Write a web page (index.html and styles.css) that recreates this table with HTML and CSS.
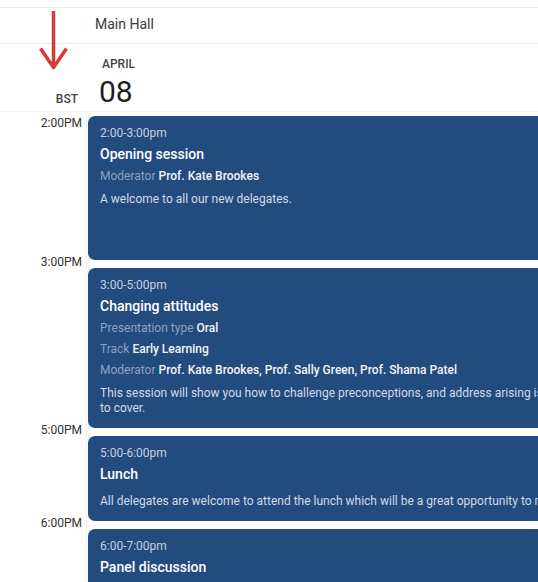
FILE: index.html
```html
<!DOCTYPE html>
<html lang="en">
<head>
<meta charset="utf-8">
<title>Agenda</title>
<link rel="stylesheet" href="styles.css">
</head>
<body>
<div class="page">
  <svg class="arrow" viewBox="0 0 80 80" width="80" height="80" aria-hidden="true">
    <line x1="53.5" y1="11" x2="53.5" y2="66" />
    <polyline points="40.5,48.5 53.5,67.5 66.5,48.5" />
  </svg>

  <div class="room-row">
    <div class="corner"></div>
    <div class="room">Main Hall</div>
  </div>

  <div class="date-row">
    <div class="tz">BST</div>
    <div class="date">
      <div class="month">APRIL</div>
      <div class="day">08</div>
    </div>
  </div>

  <div class="schedule">
    <div class="hour hour-first">2:00PM</div>
    <div class="session session-tall">
      <div class="time">2:00-3:00pm</div>
      <div class="title">Opening session</div>
      <div class="meta"><span class="label">Moderator</span> <span class="value">Prof. Kate Brookes</span></div>
      <div class="desc">A welcome to all our new delegates.</div>
    </div>

    <div class="hour">3:00PM</div>
    <div class="session">
      <div class="time">3:00-5:00pm</div>
      <div class="title">Changing attitudes</div>
      <div class="meta"><span class="label">Presentation type</span> <span class="value">Oral</span></div>
      <div class="meta"><span class="label">Track</span> <span class="value">Early Learning</span></div>
      <div class="meta"><span class="label">Moderator</span> <span class="value">Prof. Kate Brookes, Prof. Sally Green, Prof. Shama Patel</span></div>
      <div class="desc">This session will show you how to challenge preconceptions, and address arising issues that delegates have asked us<br>to cover.</div>
    </div>

    <div class="hour">5:00PM</div>
    <div class="session">
      <div class="time">5:00-6:00pm</div>
      <div class="title">Lunch</div>
      <div class="desc">All delegates are welcome to attend the lunch which will be a great opportunity to meet other delegates.</div>
    </div>

    <div class="hour">6:00PM</div>
    <div class="session session-open">
      <div class="time">6:00-7:00pm</div>
      <div class="title">Panel discussion</div>
    </div>
  </div>
</div>
</body>
</html>
```

FILE: styles.css
```css
html, body {
  margin: 0;
  padding: 0;
  background: #ffffff;
}

body {
  width: 538px;
  height: 582px;
  overflow: hidden;
  font-family: Roboto, "Liberation Sans", Arial, sans-serif;
  color: #333333;
}

.page {
  position: relative;
  width: 880px;
  padding-top: 7px;
}

.arrow {
  position: absolute;
  left: 0;
  top: 0;
  fill: none;
  stroke: #d63b3c;
  stroke-width: 3.5;
  stroke-linejoin: round;
}

.room-row {
  display: grid;
  grid-template-columns: 88px 1fr;
  border-top: 1px solid #ececec;
  border-bottom: 1px solid #ececec;
}

.room {
  padding: 6px 7px 9px;
  font-size: 14px;
  line-height: 20px;
  color: #3a3a3a;
}

.date-row {
  display: grid;
  grid-template-columns: 88px 1fr;
  border-bottom: 1px solid #f1f1f1;
}

.tz {
  display: flex;
  align-items: flex-end;
  justify-content: flex-end;
  padding: 0 10px 4px 0;
  font-size: 12px;
  line-height: 16px;
  font-weight: 500;
  color: #444444;
}

.date {
  padding: 12px 12px 3px 11px;
}

.month {
  padding-left: 3px;
  font-size: 12px;
  line-height: 16px;
  font-weight: 500;
  color: #444444;
}

.day {
  margin-top: 4px;
  font-size: 30px;
  line-height: 32px;
  color: #1e1e1e;
}

.schedule {
  display: grid;
  grid-template-columns: 88px 1fr;
  row-gap: 8px;
  padding-top: 4px;
  background: linear-gradient(to right, transparent 86px, #f0f0f0 86px, #f0f0f0 87px, transparent 87px);
}

.hour {
  margin-top: -14px;
  padding-right: 6px;
  text-align: right;
  font-size: 12px;
  line-height: 16px;
  color: #333333;
}

.hour-first {
  margin-top: -1px;
}

.session {
  padding: 9px 12px 12px;
  border-radius: 7px;
  background: #224b7e;
  color: #ffffff;
}

.session-tall {
  min-height: 144px;
  box-sizing: border-box;
}

.session-open {
  min-height: 120px;
}

.time {
  font-size: 12px;
  line-height: 16px;
  color: #c6d1df;
}

.title {
  margin-top: 3px;
  font-size: 14px;
  line-height: 20px;
  font-weight: 500;
  color: #ffffff;
}

.meta {
  margin-top: 5px;
  font-size: 12px;
  line-height: 16px;
}

.title + .meta {
  margin-top: 4px;
}

.label {
  color: #8ea2bf;
}

.value {
  font-weight: 500;
  color: #f2f5f9;
}

.desc {
  font-size: 12px;
  line-height: 15px;
  color: #d3dbe6;
}

.meta + .desc {
  margin-top: 8px;
}

.title + .desc {
  margin-top: 10px;
}
```
